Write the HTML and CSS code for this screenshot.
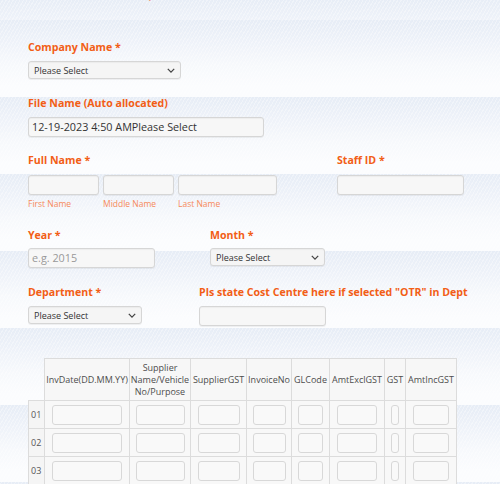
FILE: index.html
```html
<!DOCTYPE html>
<html>
<head>
<meta charset="utf-8">
<link rel="stylesheet" href="styles.css">
</head>
<body>
<div class="page">
  <div class="topnote">(Please fill in all the required fields below)</div>

  <div class="field f-company">
    <div class="label">Company Name <span class="req">*</span></div>
    <div class="select w153"><span>Please Select</span><svg class="chev" viewBox="0 0 10 6"><path d="M1 1l4 4 4-4" fill="none" stroke="#444" stroke-width="1.6"/></svg></div>
  </div>

  <div class="field f-file">
    <div class="label">File Name (Auto allocated)</div>
    <div class="input w236 big">12-19-2023 4:50 AMPlease Select</div>
  </div>

  <div class="row f-name">
    <div class="col c-name">
      <div class="label">Full Name <span class="req">*</span></div>
      <div class="names">
        <div class="sub"><div class="input w71"></div><div class="sublabel">First Name</div></div>
        <div class="sub"><div class="input w71"></div><div class="sublabel">Middle Name</div></div>
        <div class="sub"><div class="input w99"></div><div class="sublabel">Last Name</div></div>
      </div>
    </div>
    <div class="col c-staff">
      <div class="label">Staff ID <span class="req">*</span></div>
      <div class="input w126"></div>
    </div>
  </div>

  <div class="row f-year">
    <div class="col c-year">
      <div class="label">Year <span class="req">*</span></div>
      <div class="input w126 big placeholder">e.g. 2015</div>
    </div>
    <div class="col">
      <div class="label">Month <span class="req">*</span></div>
      <div class="select w115"><span>Please Select</span><svg class="chev" viewBox="0 0 10 6"><path d="M1 1l4 4 4-4" fill="none" stroke="#444" stroke-width="1.6"/></svg></div>
    </div>
  </div>

  <div class="row f-dept">
    <div class="col c-dept">
      <div class="label">Department <span class="req">*</span></div>
      <div class="select w114"><span>Please Select</span><svg class="chev" viewBox="0 0 10 6"><path d="M1 1l4 4 4-4" fill="none" stroke="#444" stroke-width="1.6"/></svg></div>
    </div>
    <div class="col">
      <div class="label">Pls state Cost Centre here if selected "OTR" in Dept</div>
      <div class="input w126"></div>
    </div>
  </div>

  <table class="grid">
    <colgroup>
      <col class="k0"><col class="k1"><col class="k2"><col class="k3"><col class="k4"><col class="k5"><col class="k6"><col class="k7"><col class="k8">
    </colgroup>
    <thead>
      <tr>
        <th class="corner"></th>
        <th>InvDate(DD.MM.YY)</th>
        <th>Supplier Name/Vehicle No/Purpose</th>
        <th>SupplierGST</th>
        <th>InvoiceNo</th>
        <th>GLCode</th>
        <th>AmtExclGST</th>
        <th>GST</th>
        <th>AmtIncGST</th>
      </tr>
    </thead>
    <tbody>
      <tr>
        <td class="rl">01</td>
        <td><div class="ci i1"></div></td><td><div class="ci i2"></div></td><td><div class="ci i3"></div></td><td><div class="ci i4"></div></td><td><div class="ci i5"></div></td><td><div class="ci i6"></div></td><td><div class="ci i7"></div></td><td><div class="ci i8"></div></td>
      </tr>
      <tr>
        <td class="rl">02</td>
        <td><div class="ci i1"></div></td><td><div class="ci i2"></div></td><td><div class="ci i3"></div></td><td><div class="ci i4"></div></td><td><div class="ci i5"></div></td><td><div class="ci i6"></div></td><td><div class="ci i7"></div></td><td><div class="ci i8"></div></td>
      </tr>
      <tr>
        <td class="rl">03</td>
        <td><div class="ci i1"></div></td><td><div class="ci i2"></div></td><td><div class="ci i3"></div></td><td><div class="ci i4"></div></td><td><div class="ci i5"></div></td><td><div class="ci i6"></div></td><td><div class="ci i7"></div></td><td><div class="ci i8"></div></td>
      </tr>
    </tbody>
  </table>
</div>
</body>
</html>
```

FILE: styles.css
```css
html, body {
  margin: 0;
  padding: 0;
}
body {
  width: 500px;
  height: 484px;
  overflow: hidden;
  font-family: "Open Sans", "Liberation Sans", sans-serif;
  background-color: #fbfcfe;
  background-image:
    repeating-linear-gradient(120deg, rgba(255,255,255,0) 0px, rgba(255,255,255,0) 2px, rgba(255,255,255,0.35) 2px, rgba(255,255,255,0.35) 3px),
    repeating-linear-gradient(180deg, #e7edf6 0px, #eef2f9 20px, #f7f9fc 45px, #fbfcfe 66px, #fbfcfe 77px);
  background-position: 0 0, 0 20px;
}
.page {
  padding-left: 28px;
}
.topnote {
  color: #f26522;
  font-size: 11px;
  font-weight: 600;
  line-height: 14px;
  height: 14px;
  margin-top: -13px;
  opacity: 0.6;
}
.label {
  color: #f25e16;
  font-weight: 700;
  font-size: 10.6px;
  line-height: 16px;
  white-space: nowrap;
}
.req { color: #f25e16; }
.field { display: block; }
.row { display: flex; }
.col { flex-shrink: 0; }
.f-company { margin-top: 38px; }
.f-company .label { margin-bottom: 6px; }
.f-file { margin-top: 16px; }
.f-file .label { margin-bottom: 6px; }
.f-name { margin-top: 15px; }
.f-name .label { margin-bottom: 7px; }
.f-year { margin-top: 18px; }
.f-year .label { margin-bottom: 5px; }
.f-dept { margin-top: 16px; }
.f-dept .label { margin-bottom: 6px; }

.c-name { width: 309px; }
.c-year { width: 182px; }
.c-dept { width: 171px; }

.names { display: flex; gap: 4px; }
.sublabel {
  color: #f68a5a;
  font-size: 8.5px;
  line-height: 10px;
  margin-top: 4px;
}

.input, .select {
  box-sizing: border-box;
  background: #f7f7f7;
  border: 1px solid #d6d6d6;
  border-radius: 3px;
  box-shadow: inset 0 1px 1px rgba(0,0,0,0.04), 0 1px 0 rgba(0,0,0,0.05);
  color: #333;
  height: 20px;
}
.input.big {
  font-size: 10.8px;
  line-height: 18px;
  padding-left: 3px;
}
.placeholder { color: #999; }
.select {
  height: 18px;
  display: flex;
  align-items: center;
  justify-content: space-between;
  padding: 0 5px 0 5px;
  font-size: 9px;
  background: #f5f5f5;
}
.chev { width: 8px; height: 5px; }
.w153 { width: 153px; }
.w236 { width: 236px; }
.w71 { width: 71px; }
.w99 { width: 99px; }
.w126 { width: 127px; }
.w115 { width: 115px; }
.w114 { width: 114px; }

.grid {
  margin-top: 32px;
  border-collapse: collapse;
  table-layout: fixed;
  width: 428px;
  font-size: 9px;
  color: #4d4d4d;
}
.k0 { width: 16px; }
.k1 { width: 85px; }
.k2 { width: 61px; }
.k3 { width: 56px; }
.k4 { width: 45px; }
.k5 { width: 38px; }
.k6 { width: 55px; }
.k7 { width: 21px; }
.k8 { width: 51px; }
.grid th {
  background: #f7f7f7;
  border: 1px solid #dcdcdc;
  font-weight: 400;
  height: 41px;
  padding: 0;
  line-height: 12px;
  text-align: center;
  white-space: normal;
}
.grid th.corner {
  background: transparent;
  border: none;
}
.grid td {
  background: #f8f8f8;
  border: 1px solid #dcdcdc;
  height: 27px;
  padding: 0;
  text-align: center;
}
.grid td.rl {
  background: #f5f5f5;
  font-size: 9px;
  color: #555;
  text-align: left;
  padding-left: 2px;
}
.ci {
  box-sizing: border-box;
  margin: 0 auto;
  height: 20px;
  background: #f9f9f9;
  border: 1px solid #d8d8d8;
  border-radius: 3px;
}
.i1 { width: 70px; }
.i2 { width: 49px; }
.i3 { width: 42px; }
.i4 { width: 33px; }
.i5 { width: 25px; }
.i6 { width: 40px; }
.i7 { width: 8px; }
.i8 { width: 36px; }
```
